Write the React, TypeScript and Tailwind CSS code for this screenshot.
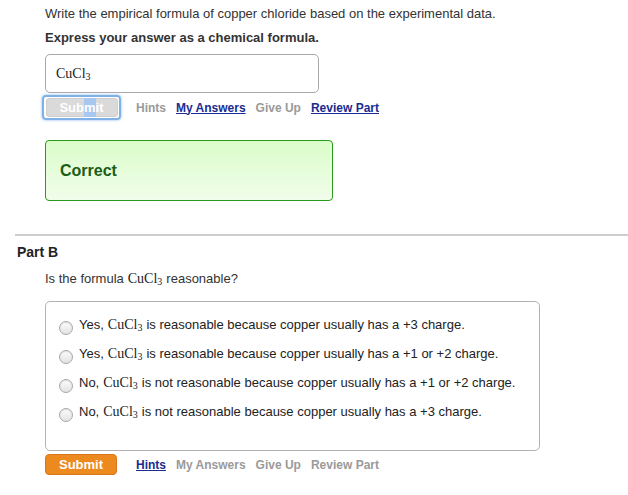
import React from "react";

const Formula = ({ size = "text-[14px]" }: { size?: string }) => (
  <span className={`${size} text-[#222]`} style={{ fontFamily: '"Liberation Serif", "Times New Roman", serif' }}>
    CuCl<sub className="text-[10px] relative top-[2px] align-baseline">3</sub>
  </span>
);

const Radio = () => (
  <span className="mt-[6px] w-[14px] h-[14px] rounded-full border border-[#a8a8a8] bg-gradient-to-b from-[#fdfdfd] to-[#e2e2e2] shadow-[inset_0_1px_1px_rgba(0,0,0,0.12)] shrink-0" />
);

const options: [string, string][] = [
  ["Yes,", "is reasonable because copper usually has a +3 charge."],
  ["Yes,", "is reasonable because copper usually has a +1 or +2 charge."],
  ["No,", "is not reasonable because copper usually has a +1 or +2 charge."],
  ["No,", "is not reasonable because copper usually has a +3 charge."],
];

export default function App() {
  return (
    <div
      className="w-[628px] h-[495px] bg-white text-[#333] text-[13px] overflow-hidden"
      style={{ fontFamily: '"Liberation Sans", Arial, Helvetica, sans-serif' }}
    >
      <div className="pl-[45px] pt-[6px]">
        <p className="leading-[15px]">Write the empirical formula of copper chloride based on the experimental data.</p>
        <p className="mt-[9px] leading-[15px] font-bold text-[13px]">Express your answer as a chemical formula.</p>
        <div className="mt-[9px] w-[274px] h-[39px] rounded-[5px] border border-[#a9a9a9] flex items-center pl-[10px]">
          <Formula />
        </div>
        <div className="mt-[2px] flex items-center">
          <div className="ml-[-3px] w-[79px] h-[25px] rounded-[4px] border-[2px] border-[#7fb1e6] shadow-[0_0_3px_#8ab8ee] flex items-center justify-center">
            <div className="w-[72px] h-[19px] rounded-[3px] bg-[#dadada] border border-[#cfcfcf] flex items-center justify-center font-bold text-white text-[13px]">
              Sub<span className="bg-[#a9c8f1]">m</span>it
            </div>
          </div>
          <div className="ml-[15px] flex items-center gap-[10px] font-bold text-[12px]">
            <span className="text-[#9a9a9a]">Hints</span>
            <span className="text-[#1a2c8f] underline">My Answers</span>
            <span className="text-[#9a9a9a]">Give Up</span>
            <span className="text-[#1a2c8f] underline">Review Part</span>
          </div>
        </div>
        <div className="mt-[20px] w-[288px] h-[61px] rounded-[4px] border border-[#2a9a1e] bg-gradient-to-b from-[#dafdc9] to-[#f1fdea] flex items-center pl-[14px]">
          <span className="font-bold text-[16px] text-[#1c5c17]">Correct</span>
        </div>
      </div>

      <div className="mt-[33px] ml-[15px] h-[2px] bg-[#cdcdcd]" />

      <div className="pl-[17px] mt-[8px]">
        <p className="font-bold text-[14px] text-[#222] leading-[17px]">Part B</p>
      </div>
      <div className="pl-[45px]">
        <p className="mt-[10px] leading-[16px] flex items-baseline gap-[4px]">
          <span>Is the formula</span>
          <Formula />
          <span>reasonable?</span>
        </p>
        <div className="mt-[14px] w-[495px] h-[150px] rounded-[5px] border border-[#b3b3b3] pl-[13px] pt-[13px] flex flex-col gap-[9px]">
          {options.map(([a, b], i) => (
            <div key={i} className="flex items-start gap-[6px]">
              <Radio />
              <span className="flex items-baseline gap-[4px] leading-[20px] text-[#222]">
                <span>{a}</span>
                <Formula />
                <span>{b}</span>
              </span>
            </div>
          ))}
        </div>
        <div className="mt-[3px] flex items-center">
          <div className="w-[72px] h-[21px] rounded-[4px] bg-[#ec8a1f] border border-[#d9771a] flex items-center justify-center font-bold text-white text-[13px]">
            Submit
          </div>
          <div className="ml-[19px] flex items-center gap-[10px] font-bold text-[12px]">
            <span className="text-[#1a2c8f] underline">Hints</span>
            <span className="text-[#9a9a9a]">My Answers</span>
            <span className="text-[#9a9a9a]">Give Up</span>
            <span className="text-[#9a9a9a]">Review Part</span>
          </div>
        </div>
      </div>
    </div>
  );
}
